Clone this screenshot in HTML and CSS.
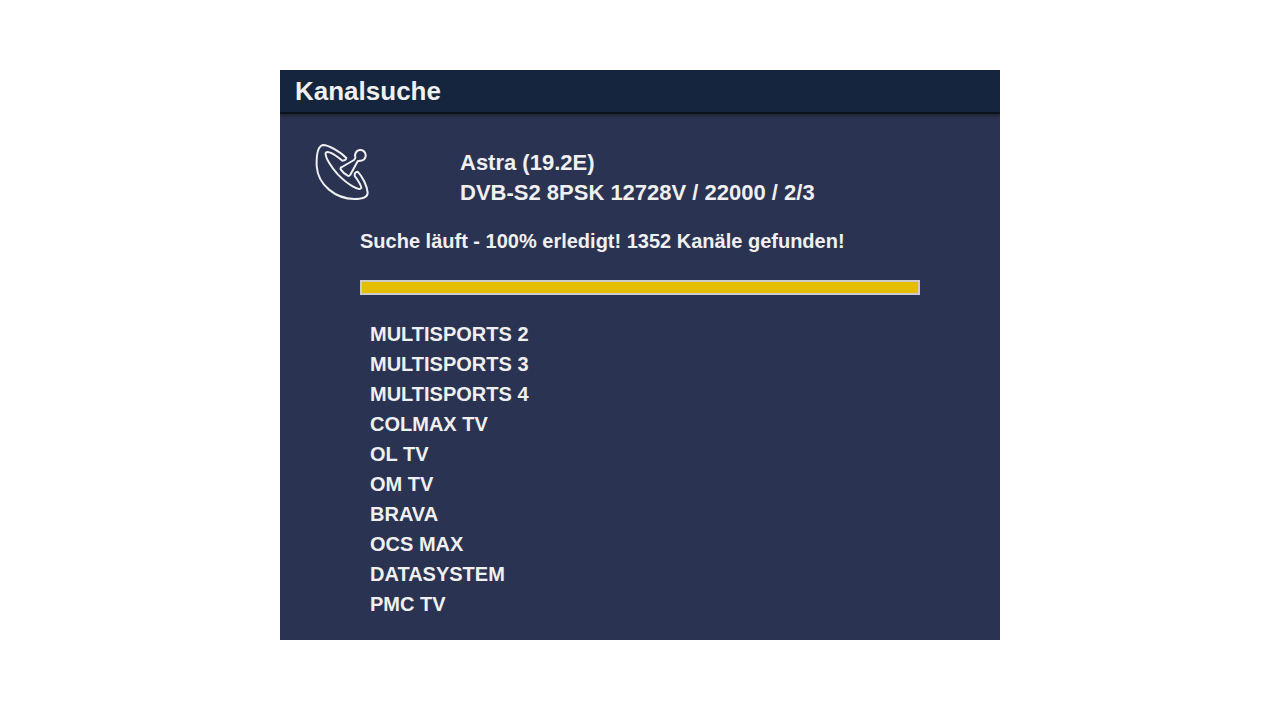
FILE: index.html
```html
<!DOCTYPE html>
<html lang="de">
    <head>
        <meta charset="UTF-8">
        <title>Kanalsuche</title>
        <link rel="stylesheet" href="styles.css">
    </head>
    <body>
        <main class="dialog">
            <header>
                <h1>Kanalsuche</h1>
            </header>
            <div class="content">
                <section class="tuner">
                    <svg class="dish" viewBox="30 26 162 168" aria-hidden="true">
                        <path d="M112 76 Q123 76 124 68 C108 51 72 29 54 29 C39 32 34 60 35 92 C39 150 92 190 148 191 C172 191 188 186 188 172 C186 152 173 124 158 109 Q148 110 149 121 C158 135 169 149 169 158 C162 168 130 149 99 118 C78 95 60 66 62 53 C66 43 88 57 112 76Z"/>
                        <path d="M151 68 L147 74 L111 95 Q105 97 107 102 Q115 114 128 121 Q133 124 136 118 L158 78 L165 76 A16 16 0 1 0 151 65Z"/>
                    </svg>
                    <div class="transponder">
                        <p>Astra (19.2E)</p>
                        <p>DVB-S2 8PSK 12728V / 22000 / 2/3</p>
                    </div>
                </section>
                <section class="scan">
                    <label for="scan-progress">Suche läuft - 100% erledigt! 1352 Kanäle gefunden!</label>
                    <progress id="scan-progress" value="100" max="100"></progress>
                    <ul>
                        <li>MULTISPORTS 2</li>
                        <li>MULTISPORTS 3</li>
                        <li>MULTISPORTS 4</li>
                        <li>COLMAX TV</li>
                        <li>OL TV</li>
                        <li>OM TV</li>
                        <li>BRAVA</li>
                        <li>OCS MAX</li>
                        <li>DATASYSTEM</li>
                        <li>PMC TV</li>
                    </ul>
                </section>
            </div>
        </main>
    </body>
</html>
```
FILE: styles.css
```css
* {
    box-sizing: border-box;
    margin: 0;
    padding: 0;
}

body {
    background: #ffffff;
    color: #f0f0f0;
    font-family: "Liberation Sans", Arial, sans-serif;
    font-weight: bold;
    padding: 70px 16px;
}

.dialog {
    max-width: 720px;
    margin: 0 auto;
    background: #2b3352;
    overflow: hidden;
}

header {
    background: #14253d;
    padding: 0 15px;
    border-bottom: 2px solid #0b121f;
    box-shadow: 0 2px 3px #20242e;
}

h1 {
    font-size: 26px;
    line-height: 42px;
}

.content {
    padding: 30px 35px 21px;
}

.tuner {
    display: flex;
    gap: 91px;
}

.dish {
    flex: none;
    width: 54px;
    height: 56px;
    fill: none;
    stroke: #f0f0f0;
    stroke-width: 6;
    stroke-linejoin: round;
}

.transponder {
    padding-top: 4px;
    font-size: 22px;
    line-height: 30px;
}

.scan {
    padding: 18px 45px 0;

    label {
        display: block;
        font-size: 20px;
        line-height: 30px;
    }

    progress {
        appearance: none;
        display: block;
        width: 100%;
        height: 15px;
        margin: 24px 0;
        border: 2px solid #cccccc;
        background: #2b3352;
    }

    progress::-webkit-progress-bar {
        background: #2b3352;
    }

    progress::-webkit-progress-value {
        background: #e6be00;
    }

    progress::-moz-progress-bar {
        background: #e6be00;
    }

    ul {
        padding: 0 10px;
        list-style: none;
        font-size: 20px;
        line-height: 30px;
    }
}
```
